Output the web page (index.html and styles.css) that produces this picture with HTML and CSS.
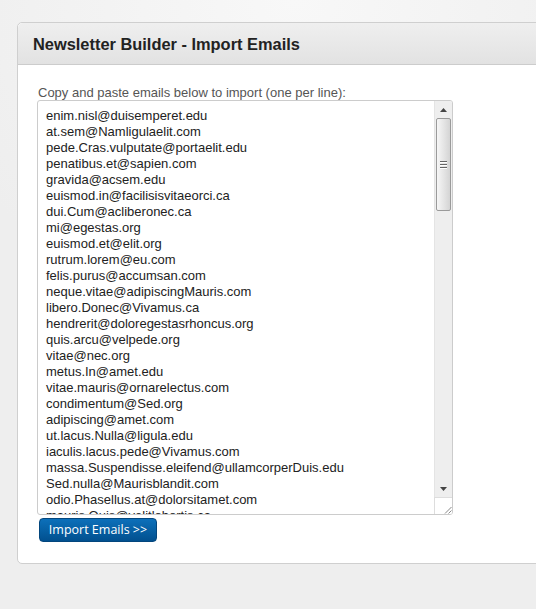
FILE: index.html
```html
<!DOCTYPE html>
<html lang="en">
<head>
<meta charset="utf-8">
<title>Newsletter Builder - Import Emails</title>
<link rel="stylesheet" href="styles.css">
</head>
<body>
<div class="panel">
  <div class="panel-header">
    <h1 class="panel-title">Newsletter Builder - Import Emails</h1>
  </div>
  <div class="panel-body">
    <label class="field-label">Copy and paste emails below to import (one per line):</label>
    <div class="textbox">
      <div class="lines">
        <div>enim.nisl@duisemperet.edu</div>
        <div>at.sem@Namligulaelit.com</div>
        <div>pede.Cras.vulputate@portaelit.edu</div>
        <div>penatibus.et@sapien.com</div>
        <div>gravida@acsem.edu</div>
        <div>euismod.in@facilisisvitaeorci.ca</div>
        <div>dui.Cum@acliberonec.ca</div>
        <div>mi@egestas.org</div>
        <div>euismod.et@elit.org</div>
        <div>rutrum.lorem@eu.com</div>
        <div>felis.purus@accumsan.com</div>
        <div>neque.vitae@adipiscingMauris.com</div>
        <div>libero.Donec@Vivamus.ca</div>
        <div>hendrerit@doloregestasrhoncus.org</div>
        <div>quis.arcu@velpede.org</div>
        <div>vitae@nec.org</div>
        <div>metus.In@amet.edu</div>
        <div>vitae.mauris@ornarelectus.com</div>
        <div>condimentum@Sed.org</div>
        <div>adipiscing@amet.com</div>
        <div>ut.lacus.Nulla@ligula.edu</div>
        <div>iaculis.lacus.pede@Vivamus.com</div>
        <div>massa.Suspendisse.eleifend@ullamcorperDuis.edu</div>
        <div>Sed.nulla@Maurisblandit.com</div>
        <div>odio.Phasellus.at@dolorsitamet.com</div>
        <div>mauris.Quis@velitlobortis.ca</div>
      </div>
      <div class="scrollbar">
        <div class="sb-btn">
          <svg width="7" height="4" viewBox="0 0 7 4"><path d="M3.5 0 L7 4 L0 4 Z" fill="#444"/></svg>
        </div>
        <div class="sb-track">
          <div class="sb-thumb">
            <span class="grip"></span><span class="grip"></span><span class="grip"></span>
          </div>
        </div>
        <div class="sb-btn">
          <svg width="7" height="4" viewBox="0 0 7 4"><path d="M0 0 L7 0 L3.5 4 Z" fill="#444"/></svg>
        </div>
        <div class="sb-corner">
          <svg width="8" height="8" viewBox="0 0 8 8"><path d="M7.5 1 L1 7.5 M7.5 4.5 L4.5 7.5" stroke="#888" stroke-width="1" fill="none"/></svg>
        </div>
      </div>
    </div>
    <button class="btn-import" type="button">Import Emails &gt;&gt;</button>
  </div>
</div>
</body>
</html>
```

FILE: styles.css
```css
html, body {
  margin: 0;
  padding: 0;
  height: 100%;
}

body {
  background: radial-gradient(ellipse 70% 55% at 55% 0%, #f8f8f8 0%, #eeeeee 100%) #eeeeee;
  overflow: hidden;
  font-family: "Liberation Sans", Arial, sans-serif;
  padding: 22px 0 0 17px;
  box-sizing: border-box;
}

.panel {
  width: 560px;
  background: #ffffff;
  border: 1px solid #cfcfcf;
  border-radius: 5px;
}

.panel-header {
  height: 41px;
  display: flex;
  align-items: center;
  padding-left: 15px;
  background: linear-gradient(#efefef, #e2e2e2);
  border-bottom: 1px solid #cccccc;
  border-radius: 5px 5px 0 0;
}

.panel-title {
  margin: 1px 0 0 0;
  font-size: 16.4px;
  font-weight: bold;
  color: #222222;
}

.panel-body {
  padding: 20px 0 21px 19px;
}

.field-label {
  display: block;
  font-size: 13px;
  line-height: 15px;
  color: #555555;
  margin: 0 0 0 1px;
}

.textbox {
  width: 414px;
  height: 413px;
  display: flex;
  border: 1px solid #cccccc;
  border-radius: 3px;
  background: #ffffff;
  overflow: hidden;
}

.lines {
  flex: 1;
  overflow: hidden;
  padding: 7px 0 0 8px;
  font-size: 13px;
  line-height: 16px;
  color: #222222;
  white-space: nowrap;
}

.scrollbar {
  width: 17px;
  display: flex;
  flex-direction: column;
  background: #eeeeee;
  border-left: 1px solid #e4e4e4;
}

.sb-btn {
  height: 17px;
  display: flex;
  align-items: center;
  justify-content: center;
  flex: none;
}

.sb-track {
  flex: 1;
  display: flex;
  flex-direction: column;
}

.sb-thumb {
  height: 91px;
  margin: 0 0 0 1px;
  width: 13px;
  border: 1px solid #9a9a9a;
  border-radius: 2px;
  background: linear-gradient(to right, #f6f6f6, #e2e2e2 60%, #d4d4d4);
  display: flex;
  flex-direction: column;
  align-items: center;
  justify-content: center;
  gap: 1px;
}

.grip {
  display: block;
  width: 7px;
  height: 1px;
  background: #666666;
  border-bottom: 1px solid #ffffff;
}

.sb-corner {
  height: 16px;
  background: #ffffff;
  border-top: 1px solid #dddddd;
  margin-left: -1px;
  border-left: 1px solid #dddddd;
  display: flex;
  align-items: flex-end;
  justify-content: flex-end;
  flex: none;
}

.btn-import {
  display: block;
  margin: 3px 0 0 2px;
  width: 118px;
  height: 24px;
  padding: 0;
  border: 1px solid #03467d;
  border-radius: 4px;
  background: linear-gradient(#0c70ba, #01508f);
  color: #ffffff;
  font-family: "Open Sans", "DejaVu Sans", sans-serif;
  font-size: 12.5px;
  line-height: 20px;
  text-align: center;
  cursor: pointer;
}
```
